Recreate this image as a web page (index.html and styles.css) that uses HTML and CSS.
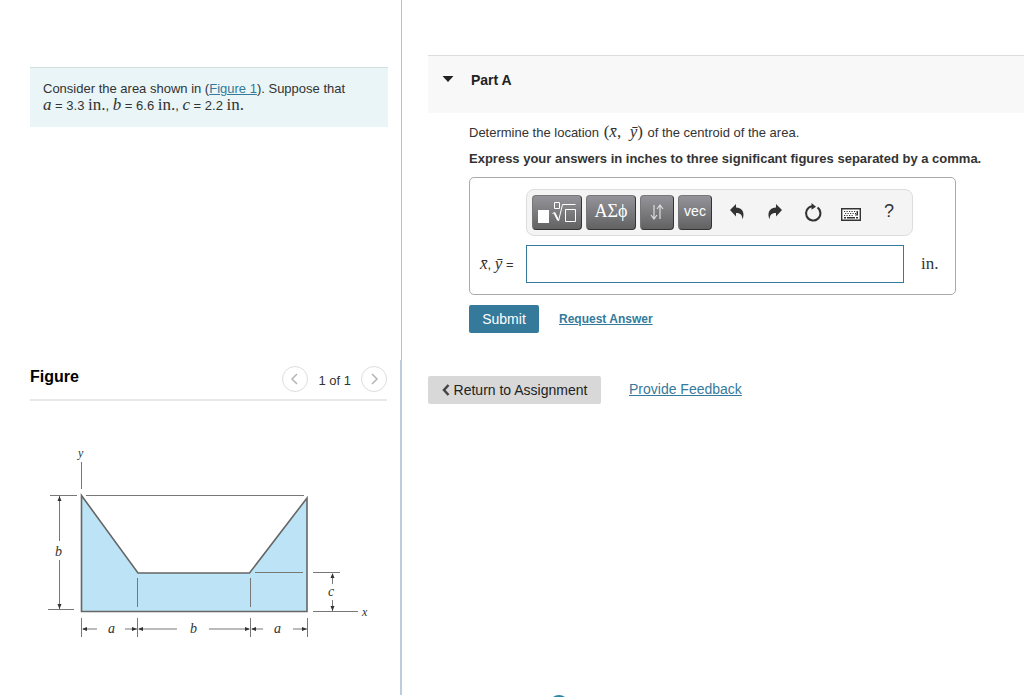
FILE: index.html
```html
<!DOCTYPE html>
<html lang="en">
<head>
<meta charset="utf-8">
<title>Part A</title>
<link rel="stylesheet" href="styles.css">
</head>
<body>
<main class="layout">
  <aside class="side">
    <section class="problem-pane">
      <p class="intro">Consider the area shown in (<a href="#figure">Figure 1</a>). Suppose that<br><i class="math">a</i> = 3.3 <span class="math">in.</span>, <i class="math">b</i> = 6.6 <span class="math">in.</span>, <i class="math">c</i> = 2.2 <span class="math">in.</span></p>
    </section>
    <section class="figure-pane" id="figure">
      <header class="figure-head">
        <h2>Figure</h2>
        <nav class="pager">
          <button class="round" aria-label="Previous figure"><svg width="24" height="24" viewBox="0 0 24 24"><path d="M14 7l-5 5 5 5"/></svg></button>
          <span>1 of 1</span>
          <button class="round" aria-label="Next figure"><svg width="24" height="24" viewBox="0 0 24 24"><path d="M10 7l5 5-5 5"/></svg></button>
        </nav>
      </header>
      <svg class="diagram" viewBox="0 0 357 210" role="img" aria-label="Area with dimensions a, b and c">
        <path class="area" d="M51.500 65.500L108 143h111.500L277 68v113.500H51.500z"/>
        <path class="edge" d="M51.500 65.500L108 143h111.500L277 68v113.500H51.500z"/>
        <path class="thin" d="M51.500 32v27M20 65.500h27M56 65.500h218M18 179.500h26M29.500 66v45M29.500 130v49M107.500 148v29M220.500 148v29M225 142.500h48M283 142.500h27M283 181.500h45M302.500 144v10M302.500 170v11M51.500 188v19M107.500 188v19M220.500 188v19M277.500 188v19M53 199h14M95 199h12M109 199h38M179 199h40M222 199h11M263 199h14"/>
        <path class="head" d="M29.500 66l-2 5h4zM29.500 179l-2-5h4zM302.500 143l-2 5h4zM302.500 181l-2-5h4zM52 199l5-2v4zM107 199l-5-2v4zM108 199l5-2v4zM220 199l-5-2v4zM221 199l5-2v4zM277 199l-5-2v4z"/>
        <g class="labels">
          <text x="48" y="27" class="small">y</text>
          <text x="332" y="186" class="small">x</text>
          <text x="25" y="126">b</text>
          <text x="78" y="203">a</text>
          <text x="160" y="203">b</text>
          <text x="244" y="203">a</text>
          <text x="298" y="166">c</text>
        </g>
      </svg>
    </section>
  </aside>
  <section class="work">
    <header class="part-head">
      <svg width="12" height="7" viewBox="0 0 12 7"><path d="M.5 0h11L6 6z" fill="#222"/></svg>
      <h1>Part A</h1>
    </header>
    <div class="question">
      <p class="ask">Determine the location <span class="math pair">(<i>x̄</i>, &nbsp;<i>ȳ</i>)</span> of the centroid of the area.</p>
      <p class="express">Express your answers in inches to three significant figures separated by a comma.</p>
      <form class="answer">
        <div class="toolbar">
          <button type="button" class="tool wide" aria-label="Templates"><svg width="40" height="24" viewBox="0 0 40 24"><path d="M1 9h11v13H1z" fill="#fff"/><path d="M17.500 1.500h5v6h-5zM28.500 8.500h10v12h-10zM15.500 12.500l2-1 4 8.500 4-16.500h13" fill="none" stroke="#fff"/><path d="M17.500 12l3.500 7" stroke="#fff" stroke-width="1.800"/></svg></button>
          <button type="button" class="tool wide greek">ΑΣϕ</button>
          <button type="button" class="tool" aria-label="Subscript and superscript"><svg width="16" height="18" viewBox="0 0 16 18"><path d="M5 1v14M2 11l3 4 3-4M11 15V1M8 5l3-4 3 4" fill="none" stroke="#ddd" stroke-width="1.200"/></svg></button>
          <button type="button" class="tool vec">vec</button>
          <button type="button" class="plain" aria-label="Undo"><svg width="16" height="18" viewBox="0 0 16 18"><path d="M1 6l6-6v3.500c5 0 9 4 7 10.500-.3 1-1 1-.8 0C13 10.500 11 9 7 9v3.500z"/></svg></button>
          <button type="button" class="plain" aria-label="Redo"><svg width="16" height="18" viewBox="0 0 16 18"><path d="M15 6L9 0v3.500C4 3.500 0 7.500 2 14c.3 1 1 1 .8 0C3 10.500 5 9 9 9v3.500z"/></svg></button>
          <button type="button" class="plain" aria-label="Reset"><svg width="18" height="20" viewBox="0 0 18 20"><path d="M13.500 4.500A7.200 7.200 0 1 1 8 3.200" fill="none" stroke="#333" stroke-width="2"/><path d="M7.500 0l4.500 3.700-4.500 3z"/></svg></button>
          <button type="button" class="plain" aria-label="Keyboard"><svg class="keys" width="20" height="13" viewBox="0 0 20 13"><path d="M.7.700h18.600v11.600H.7z" fill="#fff" stroke="#333" stroke-width="1.400"/><path d="M3 3.500h12M4 5.500h11M3 7.500h10" fill="none" stroke="#333" stroke-width="1.200" stroke-dasharray="1.200 1.300"/><path d="M15.500 3H17v4.500h-3v-1h1.500zM3 9h2v1.500H3zM6 9h8v1.500H6zM15 9h2v1.500h-2z"/></svg></button>
          <button type="button" class="plain help">?</button>
        </div>
        <label class="lead" for="ans"><i class="math">x̄</i>, <i class="math">ȳ</i> =</label>
        <input id="ans" type="text">
        <span class="unit math">in.</span>
      </form>
      <div class="actions">
        <button class="submit">Submit</button>
        <a class="request" href="#">Request Answer</a>
      </div>
    </div>
    <div class="links">
      <button class="return"><svg width="8" height="12" viewBox="0 0 8 12"><path d="M6.500 1L2 6l4.500 5" fill="none" stroke="#444" stroke-width="2.500"/></svg>Return to Assignment</button>
      <a class="feedback" href="#">Provide Feedback</a>
    </div>
  </section>
</main>
<footer class="foot"><div class="dot"></div></footer>
</body>
</html>
```
FILE: styles.css
```css
* { box-sizing: border-box; }
body {
  margin: 0;
  min-height: 100vh;
  display: flex;
  flex-direction: column;
  background: #fff;
  color: #333;
  font: 13px/16px "Liberation Sans", Arial, sans-serif;
}
h1, h2, p { margin: 0; }
a { color: #357a9b; text-underline-offset: 1px; }
button { font-family: inherit; border: 0; padding: 0; }
.math { font-family: "Liberation Serif", "Times New Roman", serif; font-size: 17px; line-height: 16px; }
.pair { margin: 0 1px; }
.layout { flex: 1; display: grid; grid-template-columns: 402fr 622fr; }
.side { display: flex; flex-direction: column; }
.problem-pane { height: 360px; padding: 67px 13px 0 30px; border-right: 1px solid #bbbfc6; }
.intro {
  padding: 13px 13px 13px 13px;
  background: #e9f5f7;
  border-top: 1px solid #d0dfe0;
}
.figure-pane { flex: 1; padding: 4px 13px 0 30px; border-right: 2px solid #bccbde; }
.figure-head {
  display: flex;
  justify-content: space-between;
  height: 37px;
  border-bottom: 2px solid #e8e8e8;
}
.figure-head h2 { font-size: 16px; line-height: 26px; color: #000; }
.pager { display: flex; gap: 10px; align-items: flex-start; }
.pager span { line-height: 34px; }
.round {
  display: grid;
  place-items: center;
  width: 26px;
  height: 26px;
  margin-top: 2px;
  border: 1px solid #ddd;
  border-radius: 50%;
  background: #fff;
}
.round path { fill: none; stroke: #b5b5b5; stroke-width: 1.5; }
.diagram { display: block; width: 100%; margin-top: 29px; }
.area { fill: #bce4f6; }
.edge { fill: none; stroke: #666; stroke-width: 1.6; }
.thin { fill: none; stroke: #777; stroke-width: 1; }
.head { fill: #333; }
.labels { font: italic 14px "Liberation Serif", serif; fill: #333; }
.small { font-size: 12px; }
.work { padding: 55px 0 0 26px; }
.part-head {
  display: flex;
  align-items: flex-start;
  gap: 17px;
  height: 58px;
  padding: 16px 14px;
  border-top: 1px solid #ddd;
  background: #f8f8f8;
}
.part-head svg { margin-top: 4px; }
.part-head h1 { font-size: 14px; line-height: 16px; color: #222; }
.question { padding: 11px 41px 0; }
.ask { margin-bottom: 10px; }
.express { font-weight: bold; white-space: nowrap; }
.answer {
  display: grid;
  grid-template-columns: 46px minmax(0, 378px) 34px;
  row-gap: 9px;
  align-items: center;
  max-width: 487px;
  margin-top: 10px;
  padding: 11px 10px;
  border: 1px solid #aaa;
  border-radius: 5px;
}
.toolbar {
  grid-column: 2 / 4;
  display: flex;
  gap: 4px;
  width: 387px;
  height: 47px;
  padding: 5px;
  border: 1px solid #ddd;
  border-radius: 8px;
  background: #f4f4f4;
}
.tool {
  display: grid;
  place-items: center;
  width: 34px;
  height: 35px;
  border: 1px solid #333;
  border-top-color: #777;
  border-left-color: #777;
  border-radius: 4px;
  background: linear-gradient(#94939a, #626262);
  color: #fff;
  font-size: 14px;
}
.tool.wide { width: 50px; }
.tool.greek { font: 18px "Liberation Serif", serif; padding-bottom: 2px; }
.tool.vec { padding-bottom: 4px; }
.plain {
  display: grid;
  place-items: center;
  width: 34px;
  height: 35px;
  background: none;
  fill: #333;
}
.tool + .plain { margin-left: 4px; }
.plain .keys { margin-top: 4px; }
.help { color: #333; font-size: 18px; padding-bottom: 2px; }
.answer input {
  width: 100%;
  height: 38px;
  border: 1px solid #357a9b;
  padding: 0 6px;
  font: inherit;
}
.unit { padding-left: 17px; }
.actions { display: flex; gap: 20px; align-items: center; margin-top: 10px; }
.submit {
  width: 70px;
  height: 28px;
  border-radius: 2px;
  background: #357a9b;
  color: #fff;
  font-size: 14px;
}
.request { font-size: 12px; font-weight: bold; }
.links { display: flex; align-items: flex-start; gap: 28px; margin-top: 43px; font-size: 14px; }
.feedback { line-height: 26px; }
.return {
  display: flex;
  align-items: center;
  justify-content: center;
  gap: 4px;
  width: 173px;
  height: 28px;
  border-radius: 2px;
  background: #d8d8d8;
  color: #222;
  font-size: 14px;
}
.foot { height: 2px; overflow: hidden; padding-left: 549px; }
.dot { width: 20px; height: 20px; border-radius: 50%; background: #2a84ab; }
```
